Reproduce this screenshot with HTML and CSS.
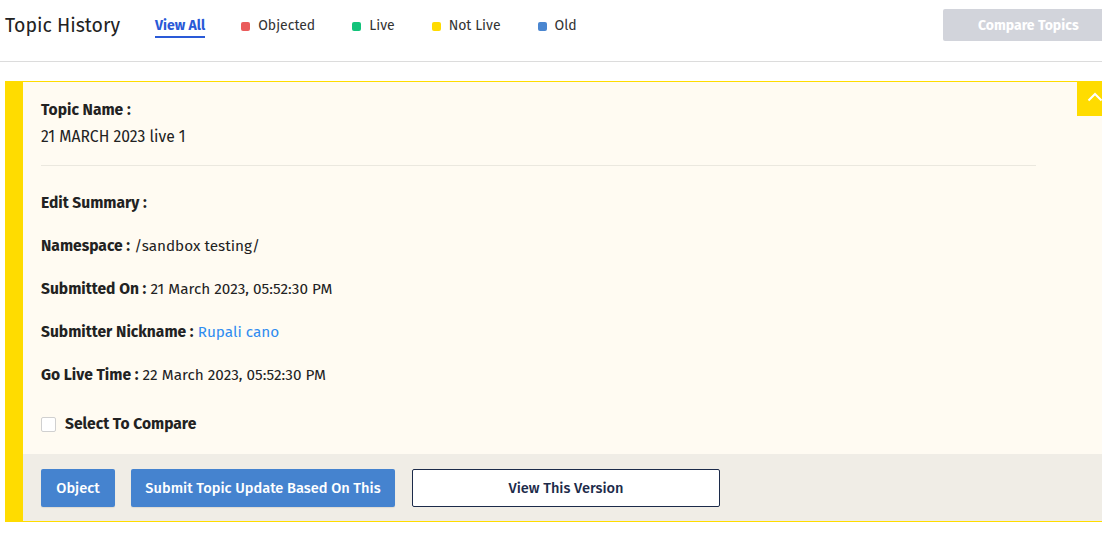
FILE: index.html
```html
<!DOCTYPE html>
<html>
<head>
<meta charset="utf-8">
<link rel="stylesheet" href="styles.css">
</head>
<body>
<div class="page">
  <header class="header">
    <h1 class="title">Topic History</h1>
    <nav class="tabs">
      <a class="tab active">View All</a>
      <span class="tab"><i class="dot red"></i>Objected</span>
      <span class="tab"><i class="dot green"></i>Live</span>
      <span class="tab"><i class="dot yellow"></i>Not Live</span>
      <span class="tab"><i class="dot blue"></i>Old</span>
    </nav>
    <button class="compare-btn">Compare Topics</button>
  </header>

  <section class="card">
    <button class="collapse" aria-label="collapse">
      <svg width="16" height="10" viewBox="0 0 16 10"><path d="M1.5 8.5 L8 2 L14.5 8.5" fill="none" stroke="#fff" stroke-width="2"/></svg>
    </button>
    <div class="card-body">
      <div class="label">Topic Name :</div>
      <div class="value">21 MARCH 2023 live 1</div>
      <hr class="divider">
      <div class="row first"><b>Edit Summary :</b></div>
      <div class="row"><b>Namespace :</b> /sandbox testing/</div>
      <div class="row"><b>Submitted On :</b> 21 March 2023, 05:52:30 PM</div>
      <div class="row"><b>Submitter Nickname :</b> <a class="link">Rupali cano</a></div>
      <div class="row"><b>Go Live Time :</b> 22 March 2023, 05:52:30 PM</div>
      <label class="check-row"><span class="checkbox"></span>Select To Compare</label>
    </div>
    <div class="card-footer">
      <button class="btn primary obj">Object</button>
      <button class="btn primary submit">Submit Topic Update Based On This</button>
      <button class="btn outline view">View This Version</button>
    </div>
  </section>
</div>
</body>
</html>
```
FILE: styles.css
```css
html, body {
  margin: 0;
  padding: 0;
  background: #fff;
  overflow: hidden;
}
body {
  font-family: "Fira Sans", Lato, "Noto Sans", sans-serif;
  color: #222;
  font-size: 15px;
}
.page {
  width: 1118px;
}
.header {
  height: 61px;
  border-bottom: 1px solid #dcdcdc;
  display: flex;
  align-items: flex-start;
  padding: 0 5px;
}
.title {
  margin: 0;
  font-weight: 400;
  font-size: 19.5px;
  line-height: 24px;
  margin-top: 14px;
  color: #222;
}
.tabs {
  display: flex;
  align-items: flex-start;
  margin-left: 35px;
  margin-top: 16px;
}
.tab {
  font-size: 14px;
  line-height: 20px;
  color: #333;
  display: flex;
  align-items: center;
  margin-right: 37px;
}
.tab.active {
  color: #2a5ad7;
  font-weight: 700;
  border-bottom: 2px solid #2a5ad7;
  padding-bottom: 0;
  margin-right: 36px;
}
.dot {
  width: 9px;
  height: 9px;
  border-radius: 2px;
  margin-right: 8px;
  display: inline-block;
}
.dot.red { background: #ea5b5b; }
.dot.green { background: #12c37a; }
.dot.yellow { background: #ffdb00; }
.dot.blue { background: #4a86d0; }
.compare-btn {
  margin-left: auto;
  margin-top: 9px;
  width: 170px;
  height: 32px;
  border: none;
  border-radius: 2px;
  background: #d2d4db;
  color: #fff;
  font-family: inherit;
  font-weight: 700;
  font-size: 14px;
  text-align: left;
  padding-left: 35px;
}
.card {
  position: relative;
  margin: 19px 5px 0 5px;
  background: #fffbf2;
  border: 1px solid #ffdc00;
  border-left: 18px solid #ffdc00;
}
.collapse {
  position: absolute;
  top: 0;
  right: 0;
  width: 35px;
  height: 34px;
  border: none;
  background: #ffdc00;
  display: flex;
  align-items: center;
  justify-content: center;
  padding: 0 0 4px 0;
}
.card-body {
  padding: 17px 76px 19px 18px;
}
.label {
  font-weight: 700;
  font-size: 15.6px;
  line-height: 22px;
}
.value {
  line-height: 22px;
  margin-top: 5px;
  font-size: 15.7px;
}
.divider {
  border: none;
  border-top: 1px solid #ebe8df;
  margin: 17px 0 0 0;
}
.row {
  line-height: 22px;
  height: 22px;
  margin-top: 21px;
  font-size: 15.3px;
}
.row b {
  font-size: 15.6px;
  font-weight: 700;
}
.row.first {
  margin-top: 26px;
}
.link {
  color: #2f8cf0;
}
.check-row {
  display: flex;
  align-items: center;
  margin-top: 27px;
  height: 22px;
  line-height: 22px;
  font-weight: 700;
  font-size: 15.6px;
}
.checkbox {
  width: 13px;
  height: 13px;
  border: 1px solid #d0d0d0;
  border-radius: 2px;
  background: #fff;
  margin-right: 9px;
}
.card-footer {
  background: #f0ede6;
  padding: 15px 18px 14px 18px;
  display: flex;
  gap: 16px;
}
.btn {
  height: 38px;
  border-radius: 2px;
  font-family: inherit;
  font-size: 14.6px;
  font-weight: 500;
  padding: 0;
}
.btn.primary {
  background: #4583cf;
  color: #fff;
  border: none;
  box-shadow: 0 1px 1px rgba(0,0,0,0.08);
}
.btn.obj { width: 74px; }
.btn.submit { width: 264px; }
.btn.outline {
  width: 308px;
  background: #fff;
  border: 1px solid #1c2b4a;
  color: #1c2b4a;
  margin-left: 1px;
}
```
